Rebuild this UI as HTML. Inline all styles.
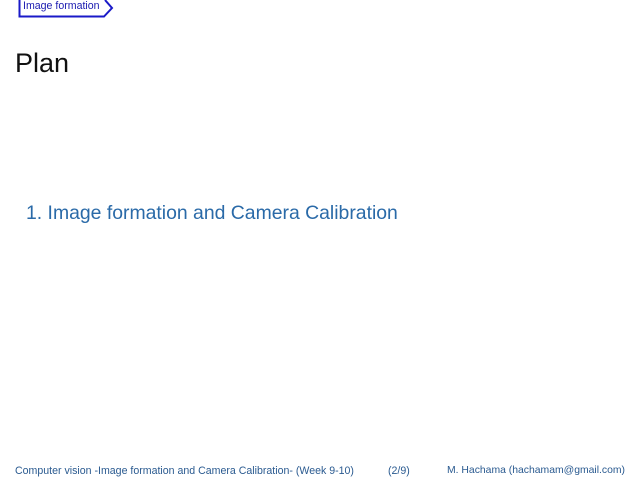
<!DOCTYPE html>
<html><head><style>
body{margin:0;width:640px;height:480px;background:#fff;position:relative;overflow:hidden;font-family:"Liberation Sans",sans-serif}
.t{position:absolute;white-space:nowrap}
</style></head><body>
<svg class="t" style="left:0;top:0" width="120" height="20">
<path d="M19.5 0 V16.5 H104 L112 8 L105 0" fill="none" stroke="#1a1ac8" stroke-width="2"/>
</svg>
<div class="t" style="left:23px;top:0px;font-size:10.6px;color:#1a1ab0;line-height:13px">Image formation</div>
<div class="t" style="left:15px;top:48px;font-size:27px;color:#111;">Plan</div>
<div class="t" style="left:26px;top:202px;font-size:19.4px;color:#2a6aa8;">1. Image formation and Camera Calibration</div>
<div class="t" style="left:15px;top:465px;font-size:10.6px;color:#2a5a90;">Computer vision -Image formation and Camera Calibration- (Week 9-10)</div>
<div class="t" style="left:388px;top:465px;font-size:10.6px;color:#2a5a90;">(2/9)</div>
<div class="t" style="left:447px;top:465px;font-size:10.4px;color:#2a5a90;">M. Hachama (hachamam@gmail.com)</div>
</body></html>
